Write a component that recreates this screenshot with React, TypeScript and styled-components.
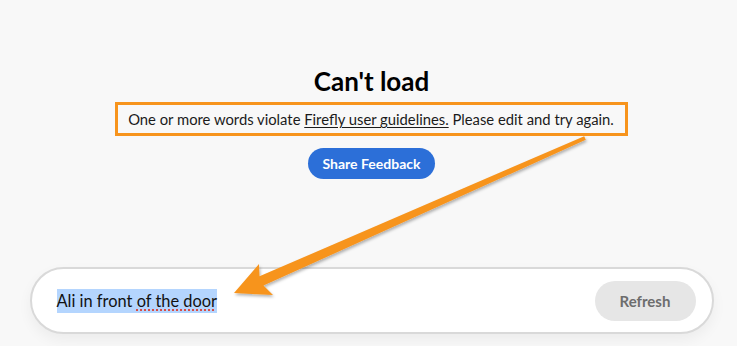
import React from 'react';
import styled, { createGlobalStyle } from 'styled-components';

const GlobalStyle = createGlobalStyle`
  html, body {
    margin: 0;
    padding: 0;
    background: #f8f8f8;
    font-family: Lato, "Open Sans", Arial, sans-serif;
  }
`;

const Page = styled.div`
  position: relative;
  width: 737px;
  height: 346px;
  overflow: hidden;
  box-sizing: border-box;
  padding-left: 6px;
  display: flex;
  flex-direction: column;
  align-items: center;
`;

const Title = styled.h1`
  margin: 65px 0 0;
  font-size: 26px;
  line-height: 32px;
  font-weight: 700;
  color: #000;
`;

const Notice = styled.p`
  margin: 5px 0 0;
  box-sizing: border-box;
  height: 34px;
  padding: 0 11px 0 10px;
  border: 3px solid #f7941d;
  font-size: 14.8px;
  line-height: 28px;
  color: #1b1b1b;
`;

const GuideLink = styled.a`
  color: inherit;
  text-decoration: underline;
  text-underline-offset: 2px;
`;

const FeedbackButton = styled.button`
  margin-top: 12px;
  height: 31px;
  padding: 0 15px;
  border: none;
  border-radius: 16px;
  background: #2c6fd8;
  color: #fff;
  font-family: inherit;
  font-size: 14px;
  font-weight: 700;
  cursor: pointer;
`;

const PromptBar = styled.div`
  margin-top: 88px;
  box-sizing: border-box;
  width: 684px;
  height: 67px;
  border: 2px solid #d9d9d9;
  border-radius: 34px;
  background: #fff;
  box-shadow: 0 6px 14px rgba(0, 0, 0, 0.05);
  display: flex;
  align-items: center;
  justify-content: space-between;
  padding: 0 16px 0 25px;
`;

const PromptText = styled.span`
  font-size: 16.4px;
  line-height: 24px;
  color: #111;
  background: #b4d5fe;
`;

const Misspelled = styled.span`
  text-decoration: underline dotted #e0301e;
  text-underline-offset: 3px;
`;

const RefreshButton = styled.button`
  width: 101px;
  height: 40px;
  border: none;
  border-radius: 20px;
  background: #e6e6e6;
  color: #6d6d6d;
  font-family: inherit;
  font-size: 15px;
  font-weight: 700;
`;

const Annotation = styled.svg`
  position: absolute;
  left: 0;
  top: 0;
  pointer-events: none;
`;

export default function App() {
  return (
    <>
      <GlobalStyle />
      <Page>
        <Title>Can't load</Title>
        <Notice>
          One or more words violate <GuideLink href="#">Firefly user guidelines.</GuideLink> Please edit and try again.
        </Notice>
        <FeedbackButton>Share Feedback</FeedbackButton>
        <PromptBar>
          <PromptText>
            Ali in front <Misspelled>of the door</Misspelled>
          </PromptText>
          <RefreshButton>Refresh</RefreshButton>
        </PromptBar>
        <Annotation width="737" height="346" viewBox="0 0 737 346">
          <defs>
            <filter id="arrowShadow" x="-10%" y="-10%" width="120%" height="130%">
              <feDropShadow dx="1" dy="2" stdDeviation="1.5" floodColor="#000" floodOpacity="0.3" />
            </filter>
          </defs>
          <polygon
            points="234,293 259,264 259.5,276.3 584.2,136.2 585.8,139.8 263.5,285.5 273,295"
            fill="#f7941d"
            filter="url(#arrowShadow)"
          />
        </Annotation>
      </Page>
    </>
  );
}
